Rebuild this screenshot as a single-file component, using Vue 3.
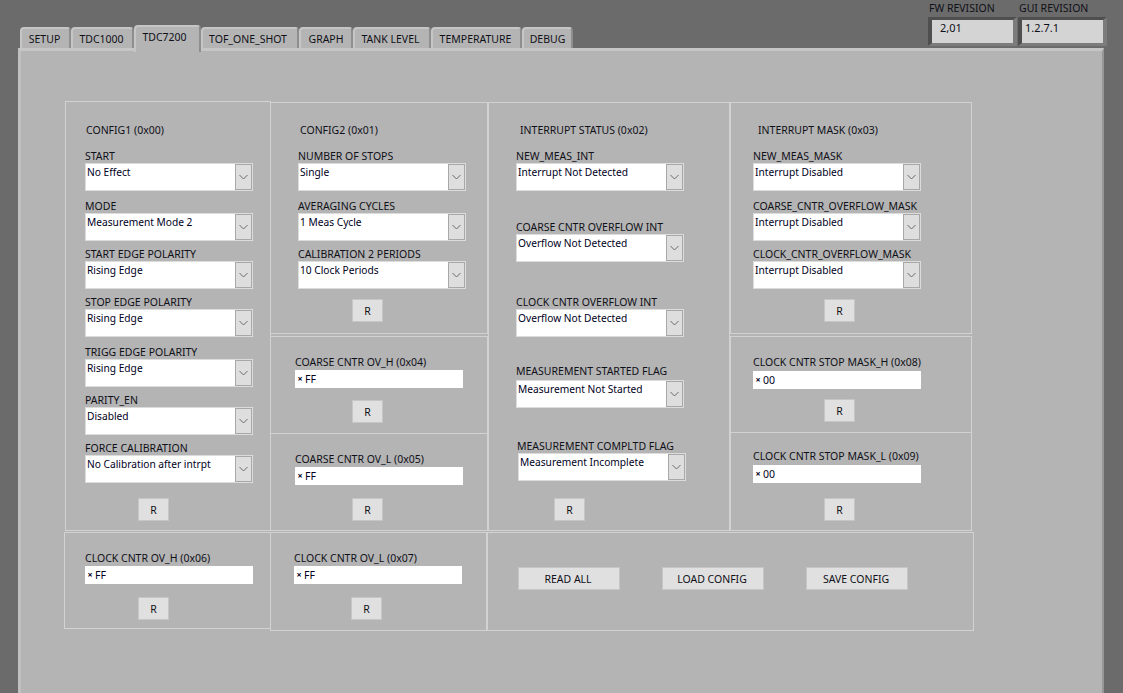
<script setup>
const tabs = [
  { name: 'SETUP', w: 51, sh: 2 }, { name: 'TDC1000', w: 63, sh: 2 }, { name: 'TDC7200', w: 67, sh: 6, active: true },
  { name: 'TOF_ONE_SHOT', w: 98, sh: 4 }, { name: 'GRAPH', w: 54, sh: 0 }, { name: 'TANK LEVEL', w: 78, sh: 3 },
  { name: 'TEMPERATURE', w: 91, sh: 2 }, { name: 'DEBUG', w: 51, sh: 0 }
]
const sel = (label, value, top, dx = 0, lift = 0, ldx = 0) => ({ type: 'sel', label, value, top, dx, lift, ldx })
const num = (label, value, top, lift = 1) => ({ type: 'num', label, value, top, dx: 0, lift, ldx: 0 })
const columns = [
  { cls: 'c1', panels: [
    { h: 430, pad: 19, title: 'CONFIG1 (0x00)', tx: 1, ty: 21, bx: 53, by: 15, items: [
      sel('START', 'No Effect', 12), sel('MODE', 'Measurement Mode 2', 8),
      sel('START EDGE POLARITY', 'Rising Edge', 6), sel('STOP EDGE POLARITY', 'Rising Edge', 6),
      sel('TRIGG EDGE POLARITY', 'Rising Edge', 8), sel('PARITY_EN', 'Disabled', 6),
      sel('FORCE CALIBRATION', 'No Calibration after intrpt', 6)
    ] }
  ] },
  { cls: 'c2', panels: [
    { h: 232, pad: 27, title: 'CONFIG2 (0x01)', tx: 2, ty: 20, bx: 54, by: 10, items: [
      sel('NUMBER OF STOPS', 'Single', 12), sel('AVERAGING CYCLES', '1 Meas Cycle', 8),
      sel('CALIBRATION 2 PERIODS', '10 Clock Periods', 6)
    ] },
    { h: 98, gap: 2, pad: 24, bx: 57, by: 12, items: [num('COARSE CNTR OV_H (0x04)', 'FF', 18)] },
    { h: 98, gap: -1, pad: 24, bx: 57, by: 13, items: [num('COARSE CNTR OV_L (0x05)', 'FF', 18)] }
  ] },
  { cls: 'c3', panels: [
    { h: 429, pad: 27, title: 'INTERRUPT STATUS (0x02)', tx: 4, ty: 20, bx: 38, by: 17, items: [
      sel('NEW_MEAS_INT', 'Interrupt Not Detected', 12), sel('COARSE CNTR OVERFLOW INT', 'Overflow Not Detected', 29),
      sel('CLOCK CNTR OVERFLOW INT', 'Overflow Not Detected', 33),
      sel('MEASUREMENT STARTED FLAG', 'Measurement Not Started', 27, 0, 2),
      sel('MEASUREMENT COMPLTD FLAG', 'Measurement Incomplete', 31, 2, 0, 1)
    ] }
  ] },
  { cls: 'c4', panels: [
    { h: 232, pad: 22, title: 'INTERRUPT MASK (0x03)', tx: 5, ty: 20, bx: 71, by: 10, items: [
      sel('NEW_MEAS_MASK', 'Interrupt Disabled', 12), sel('COARSE_CNTR_OVERFLOW_MASK', 'Interrupt Disabled', 8),
      sel('CLOCK_CNTR_OVERFLOW_MASK', 'Interrupt Disabled', 6)
    ] },
    { h: 97, gap: 2, pad: 22, bx: 71, by: 10, items: [num('CLOCK CNTR STOP MASK_H (0x08)', '00', 18, 2)] },
    { h: 99, gap: -1, pad: 22, bx: 71, by: 15, items: [num('CLOCK CNTR STOP MASK_L (0x09)', '00', 16, 2)] }
  ] }
]
const bottom = [
  { cls: 'b1', pad: 20, bx: 53, by: 13, h: 97, items: [num('CLOCK CNTR OV_H (0x06)', 'FF', 18)] },
  { cls: 'b2', pad: 23, bx: 57, by: 13, h: 99, items: [num('CLOCK CNTR OV_L (0x07)', 'FF', 18)] }
]
const actions = ['READ ALL', 'LOAD CONFIG', 'SAVE CONFIG']
</script>

<template>
  <div class="screen">
    <header class="top">
      <nav class="tabs">
        <div v-for="t in tabs" :key="t.name" class="tab" :class="{ active: t.active }" :style="{ width: t.w + 'px', paddingRight: t.sh + 'px' }">{{ t.name }}</div>
      </nav>
      <div class="revs">
        <div class="rev">
          <div class="rev-label">FW REVISION</div>
          <div class="rev-box fw">2,01</div>
        </div>
        <div class="rev">
          <div class="rev-label">GUI REVISION</div>
          <div class="rev-box">1.2.7.1</div>
        </div>
      </div>
    </header>
    <main class="body">
      <div class="row-top">
        <div v-for="col in columns" :key="col.cls" class="col" :class="col.cls">
          <section v-for="(p, i) in col.panels" :key="i" class="panel"
            :style="{ height: p.h + 'px', paddingLeft: p.pad + 'px', marginTop: (p.gap || 0) + 'px' }">
            <div v-if="p.title" class="title" :style="{ marginLeft: p.tx + 'px', marginTop: p.ty + 'px' }">{{ p.title }}</div>
            <div v-for="f in p.items" :key="f.label" class="field" :style="{ marginTop: f.top + 'px' }">
              <div class="label" :style="{ marginBottom: f.lift + 'px', marginLeft: f.ldx + 'px' }">{{ f.label }}</div>
              <div v-if="f.type === 'sel'" class="select" :style="{ marginLeft: f.dx + 'px' }">
                <span class="sel-text">{{ f.value }}</span>
                <span class="arrow">
                  <svg width="9" height="6" viewBox="0 0 9 6"><path d="M0.5 1 L4.5 5 L8.5 1" fill="none" stroke="#6a6a6a" stroke-width="1"/></svg>
                </span>
              </div>
              <div v-else class="num"><span class="x">×</span>{{ f.value }}</div>
            </div>
            <button class="btn r" :style="{ marginLeft: p.bx + 'px', marginTop: p.by + 'px' }">R</button>
          </section>
        </div>
      </div>
      <div class="row-bottom">
        <section v-for="p in bottom" :key="p.cls" class="panel" :class="p.cls" :style="{ height: p.h + 'px', paddingLeft: p.pad + 'px' }">
          <div v-for="f in p.items" :key="f.label" class="field" :style="{ marginTop: '18px' }">
            <div class="label" :style="{ marginBottom: f.lift + 'px' }">{{ f.label }}</div>
            <div class="num"><span class="x">×</span>{{ f.value }}</div>
          </div>
          <button class="btn r" :style="{ marginLeft: p.bx + 'px', marginTop: p.by + 'px' }">R</button>
        </section>
        <section class="panel b3">
          <button v-for="a in actions" :key="a" class="btn wide">{{ a }}</button>
        </section>
      </div>
    </main>
  </div>
</template>

<style>
html, body { margin: 0; background: #6b6b6b; }
</style>

<style scoped>
.screen {
  width: 1123px; height: 693px; background: #6b6b6b; overflow: hidden;
  font-family: "Noto Sans", "Liberation Sans", sans-serif; font-size: 10.5px; color: #101018;
  display: flex; flex-direction: column;
}
.top { height: 48px; display: flex; flex: none; }
.tabs { display: flex; align-items: flex-end; padding-left: 20px; gap: 0; }
.tab {
  height: 21px; box-sizing: border-box; background: #b4b4b4; text-align: center; line-height: 20px; white-space: nowrap;
  border-top: 2px solid #c6c6c6; border-left: 2px solid #c6c6c6; border-right: 2px solid #8e8e8e;
  border-radius: 4px 4px 0 0; position: relative;
}
.tab.active {
  height: 27px; margin-bottom: -4px; z-index: 2; line-height: 20px; background: #b4b4b4;
  border-bottom: none;
}
.revs { margin-left: auto; margin-right: 16px; display: flex; padding-top: 1px; }
.rev { width: 89px; margin-right: 1px; }
.rev:last-child { margin-right: 0; }
.rev-label { line-height: 14px; height: 14px; margin-bottom: 2px; padding-left: 1px; }
.rev-box {
  height: 29px; box-sizing: border-box; background: #d4d4d4; padding-left: 3px; line-height: 16px; font-size: 11px;
  border-style: solid; border-width: 3px 4px 3px 4px; border-color: #4f4f4f #7c7c7c #7c7c7c #4f4f4f;
}
.rev-box.fw { padding-left: 8px; }
.body {
  margin-left: 18px; width: 1086px; flex: 1; box-sizing: border-box; background: #b4b4b4;
  border-top: 3px solid #c6c6c6; border-left: 3px solid #c0c0c0; border-right: 2px solid #979797;
  padding-left: 43px; padding-top: 50px;
}
.row-top { display: flex; align-items: flex-start; height: 430px; }
.col { display: flex; flex-direction: column; box-sizing: border-box; }
.c1 { width: 206px; margin-left: 1px; }
.c2 { width: 218px; margin-left: -1px; padding-top: 1px; }
.c3 { width: 242px; padding-top: 1px; }
.c4 { width: 242px; padding-top: 1px; }
.panel {
  box-sizing: border-box; border: 1px solid #d2d2d2; display: flex; flex-direction: column; align-items: flex-start;
}
.title { line-height: 14px; height: 14px; white-space: nowrap; }
.label { line-height: 14px; height: 14px; white-space: nowrap; }
.select {
  width: 168px; height: 28px; box-sizing: border-box; background: #fff; border: 1px solid #dcdcdc;
  display: flex; justify-content: space-between;
}
.sel-text { padding-left: 1px; line-height: 16px; color: #00001c; font-size: 10.2px; }
.arrow {
  width: 17px; height: 26px; box-sizing: border-box; background: #dedede; border: 1px solid #a8a8a8;
  display: flex; align-items: center; justify-content: center;
}
.num {
  width: 168px; height: 18px; background: #fff; line-height: 18px; display: flex; color: #00001c;
}
.x { font-size: 9px; width: 10px; text-align: center; font-weight: 700; }
.btn {
  box-sizing: border-box; background: #e0e0e0; border: 1px solid #c6c6c6; font: inherit; color: inherit;
  padding: 0; margin: 0; display: block;
}
.r { width: 31px; height: 23px; }
.row-bottom { display: flex; margin-top: 1px; align-items: flex-start; }
.b1 { width: 207px; }
.b2 { width: 217px; margin-left: -1px; }
.b3 {
  width: 487px; height: 99px; flex-direction: row; align-items: flex-start;
  padding: 34px 0 0 30px; gap: 42px;
}
.wide { width: 102px; height: 23px; padding-right: 2px; }
</style>
